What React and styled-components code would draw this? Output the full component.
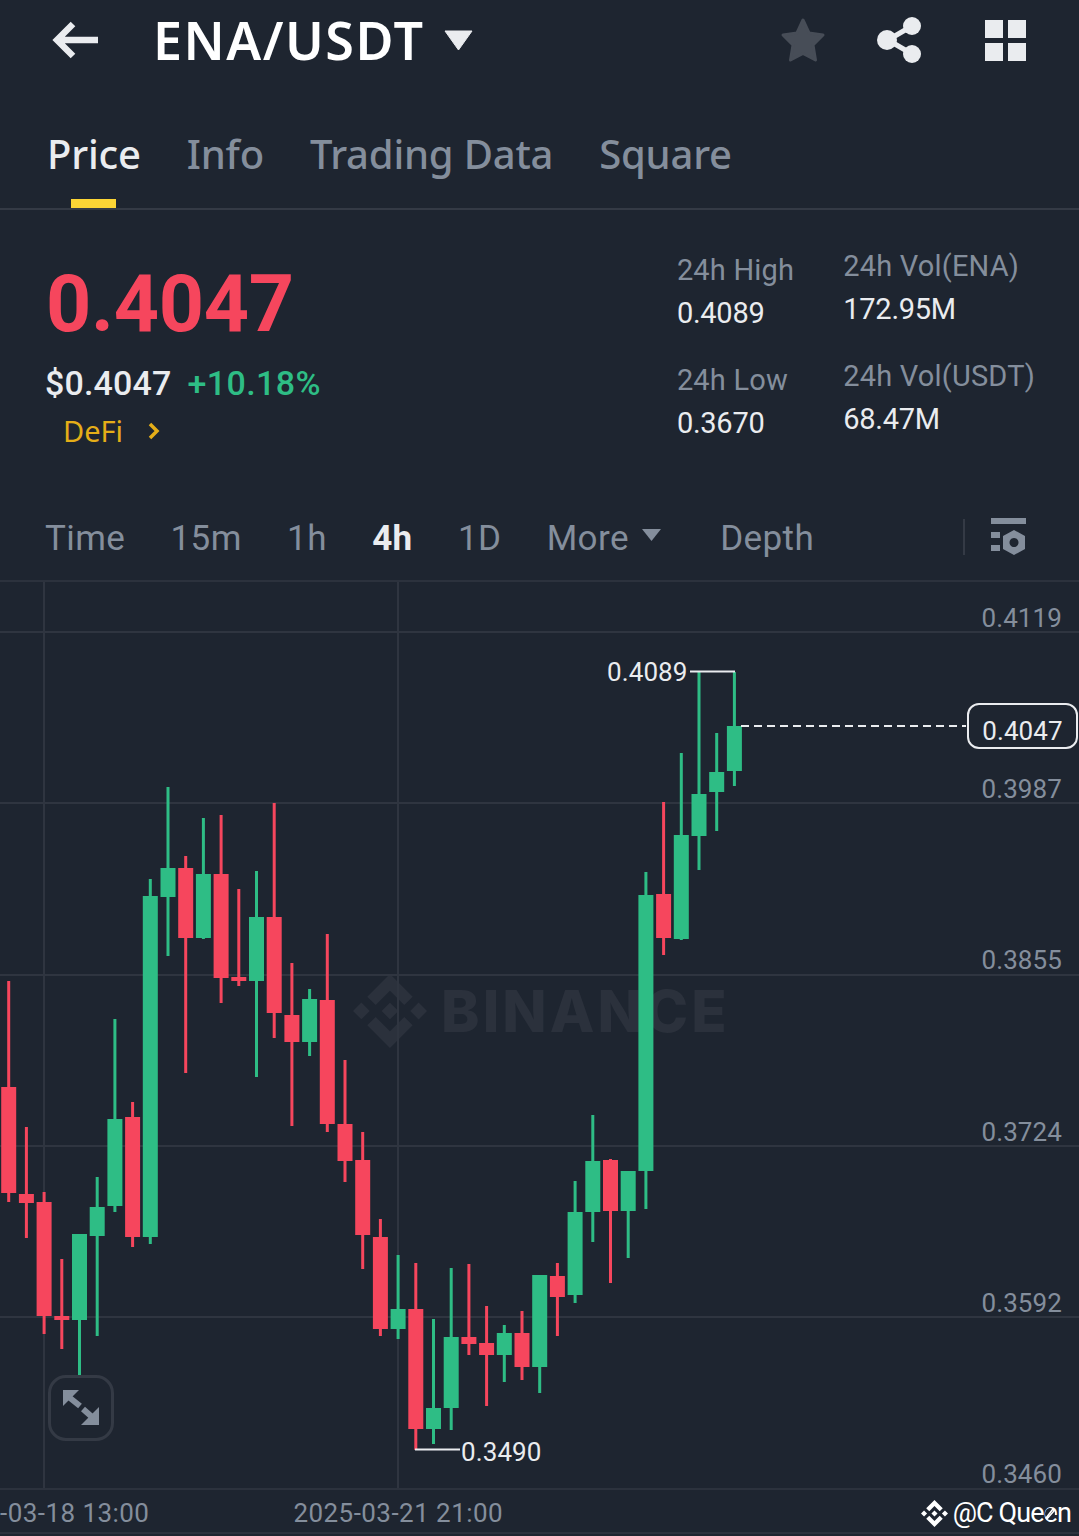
import React from 'react'
import styled, { createGlobalStyle } from 'styled-components'
import { SiBinance } from 'react-icons/si'

const UP = '#2ebd85'
const DOWN = '#f6465d'
const CHART_TOP = 582

// color, wick top, body top, body bottom, wick bottom (page y)
const candles = [
  ['d', 981, 1087, 1193, 1202], ['d', 1127, 1194, 1203, 1238], ['d', 1192, 1202, 1316, 1334],
  ['d', 1259, 1316, 1320, 1349], ['u', 1234, 1234, 1320, 1375], ['u', 1177, 1207, 1236, 1336],
  ['u', 1019, 1119, 1206, 1212], ['d', 1102, 1117, 1237, 1247], ['u', 879, 896, 1237, 1244],
  ['u', 787, 868, 897, 956], ['d', 856, 868, 938, 1073], ['u', 818, 874, 938, 939],
  ['d', 815, 874, 978, 1003], ['d', 889, 977, 981, 986], ['u', 871, 917, 981, 1077],
  ['d', 803, 917, 1013, 1038], ['d', 963, 1015, 1042, 1126], ['u', 989, 999, 1042, 1056],
  ['d', 934, 1000, 1124, 1132], ['d', 1060, 1124, 1161, 1182], ['d', 1132, 1160, 1235, 1269],
  ['d', 1219, 1237, 1329, 1336], ['u', 1255, 1309, 1329, 1339], ['d', 1263, 1309, 1429, 1450],
  ['u', 1319, 1408, 1429, 1444], ['u', 1268, 1337, 1408, 1430], ['d', 1264, 1337, 1344, 1355],
  ['d', 1306, 1343, 1355, 1406], ['u', 1325, 1333, 1355, 1382], ['d', 1311, 1333, 1367, 1380],
  ['u', 1275, 1275, 1367, 1393], ['d', 1263, 1276, 1297, 1336], ['u', 1181, 1212, 1295, 1303],
  ['u', 1115, 1161, 1212, 1242], ['d', 1159, 1160, 1211, 1283], ['u', 1171, 1171, 1211, 1258],
  ['u', 872, 895, 1171, 1209], ['d', 802, 894, 938, 955], ['u', 753, 835, 939, 940],
  ['u', 672, 794, 836, 870], ['u', 733, 772, 792, 831], ['u', 672, 726, 771, 786],
]

const GlobalStyle = createGlobalStyle`
  html, body { margin: 0; padding: 0; background: #1e2530; }
  * { box-sizing: border-box; }
`

const Page = styled.div`
  width: 1079px;
  height: 1536px;
  overflow: hidden;
  background: #1e2530;
  color: #eaecef;
  font-family: "Noto Sans", Roboto, sans-serif;
`

const Header = styled.div`
  height: 84px;
  display: flex;
  align-items: center;
  padding: 0 53px 4px 52px;
`

const Title = styled.div`
  margin-left: 55px;
  font-size: 52px;
  font-weight: 600;
  line-height: 60px;
  color: #fff;
  letter-spacing: 1.5px;
`

const TitleCaret = styled.svg`
  margin-left: 20px;
`

const HeaderIcons = styled.div`
  margin-left: auto;
  display: flex;
  align-items: center;
  gap: 51px;
`

const LastIcon = styled.svg`
  margin-left: 13px;
`

const Tabs = styled.div`
  height: 126px;
  display: flex;
  gap: 46px;
  padding: 45px 0 0 47px;
  border-bottom: 2px solid #343a45;
`

const Tab = styled.div`
  position: relative;
  height: 79px;
  font-size: 40px;
  line-height: 50px;
  font-weight: 500;
  letter-spacing: -0.2px;
  color: ${(p) => (p.$active ? '#eaecef' : '#848e9c')};

  &::after {
    content: '';
    display: ${(p) => (p.$active ? 'block' : 'none')};
    position: absolute;
    left: 24px;
    bottom: 0;
    width: 45px;
    height: 9px;
    background: #fcd535;
  }
`

const Stats = styled.div`
  height: 281px;
  display: flex;
  justify-content: space-between;
`

const PriceBlock = styled.div`
  padding: 49px 0 0 46px;
`

const LastPrice = styled.div`
  font-family: Roboto, sans-serif;
  font-size: 79px;
  line-height: 90px;
  font-weight: 700;
  letter-spacing: -0.3px;
  color: ${DOWN};
`

const SubRow = styled.div`
  margin: 14px 0 0 -1px;
  display: flex;
  gap: 16px;
  font-family: Roboto, sans-serif;
  font-size: 34px;
  line-height: 40px;
  font-weight: 500;
  letter-spacing: 0.15px;
`

const Change = styled.span`
  color: ${UP};
  letter-spacing: 0.4px;
`

const SectorLink = styled.div`
  margin: 10px 0 0 17px;
  display: flex;
  align-items: center;
  gap: 24px;
  font-size: 29px;
  line-height: 36px;
  color: #e5ae18;
`

const StatGrid = styled.div`
  display: flex;
  gap: 49px;
  padding-right: 44px;
`

const StatColumn = styled.div`
  display: flex;
  flex-direction: column;
  gap: 24px;
  padding-top: ${(p) => p.$top}px;
`

const StatLabel = styled.div`
  font-family: Roboto, sans-serif;
  font-size: 29px;
  line-height: 43px;
  color: #848e9c;
  letter-spacing: 0.2px;
`

const StatValue = styled.div`
  font-family: Roboto, sans-serif;
  font-size: 29px;
  line-height: 43px;
  color: #eaecef;
  letter-spacing: -0.25px;
`

const Intervals = styled.div`
  height: 91px;
  display: flex;
  align-items: center;
  gap: 45.3px;
  padding: 6px 52px 0 45px;
  border-bottom: 2px solid #2c323d;
  font-family: Roboto, sans-serif;
  font-size: 35px;
`

const Interval = styled.div`
  color: ${(p) => (p.$active ? '#eaecef' : '#848e9c')};
  font-weight: ${(p) => (p.$active ? 700 : 400)};
  letter-spacing: 0.4px;
  display: flex;
  align-items: center;
  gap: 12px;
  margin-right: ${(p) => p.$after || 0}px;
`

const MoreCaret = styled.svg`
  margin-bottom: 7px;
`

const IntervalTools = styled.div`
  margin-left: auto;
  margin-top: -4px;
  display: flex;
  align-items: center;
  gap: 25px;
`

const ToolDivider = styled.div`
  width: 2px;
  height: 36px;
  background: #343a45;
`

const Chart = styled.div`
  position: relative;
  height: 908px;
  border-bottom: 2px solid #2c323d;
`

const Watermark = styled.div`
  position: absolute;
  left: 353px;
  top: 391px;
  display: flex;
  align-items: center;
  gap: 14px;
  color: #2b313c;
  font-family: Inter, sans-serif;
  font-size: 58px;
  line-height: 76px;
  font-weight: 800;
  letter-spacing: 3.1px;
`

const Plot = styled.svg`
  position: absolute;
  left: 0;
  top: 0;
`

const PriceAxis = styled.div`
  position: absolute;
  top: 20px;
  right: 17px;
  height: 888px;
  display: flex;
  flex-direction: column;
  justify-content: space-between;
  align-items: flex-end;
`

const AxisLabel = styled.div`
  font-family: Roboto, sans-serif;
  font-size: 26px;
  line-height: 32px;
  letter-spacing: 0.1px;
  color: #848e9c;
`

const CurrentPrice = styled.div`
  position: absolute;
  left: 967px;
  top: 121px;
  width: 111px;
  height: 46px;
  display: flex;
  align-items: center;
  justify-content: center;
  padding-top: 9px;
  border: 2px solid #eaecef;
  border-radius: 12px;
  background: #1e2530;
  font-family: Roboto, sans-serif;
  font-size: 26px;
  letter-spacing: 0.1px;
`

const PeakLabel = styled.div`
  position: absolute;
  left: ${(p) => p.$x}px;
  top: ${(p) => p.$y}px;
  font-family: Roboto, sans-serif;
  font-size: 26px;
  line-height: 32px;
  letter-spacing: 0.1px;
  color: #eaecef;
`

const ExpandButton = styled.div`
  position: absolute;
  left: 48px;
  top: 793px;
  width: 66px;
  height: 66px;
  display: flex;
  align-items: center;
  justify-content: center;
  border: 3px solid #343a45;
  border-radius: 18px;
  background: #1e2530;
`

const TimeAxis = styled.div`
  position: relative;
  height: 44px;
  display: flex;
  align-items: center;
  gap: 144px;
  border-bottom: 2px solid #2c323d;
  padding: 4px 8px 0 0;
  font-family: Roboto, sans-serif;
  font-size: 26px;
  letter-spacing: 0.45px;
  color: #848e9c;
`

const Author = styled.div`
  position: relative;
  margin-left: auto;
  display: flex;
  align-items: center;
  gap: 5px;
  color: #fff;
  font-family: Roboto, sans-serif;
  font-size: 27px;
  letter-spacing: -0.9px;
`

const EditMark = styled.svg`
  position: absolute;
  right: 15px;
  top: 8px;
`

const BackArrow = () => (
  <svg width="46" height="38" viewBox="0 0 46 38">
    <path d="M21 3 L5 19 L21 35 M6 19 H46" fill="none" stroke="#eaecef" strokeWidth="6.5" />
  </svg>
)

const StarIcon = () => (
  <svg width="46" height="46" viewBox="0 0 46 46">
    <path
      d="M23 3 L29 16 L43 18 L33 28 L35.5 43 L23 36.5 L10.5 43 L13 28 L3 18 L17 16 Z"
      fill="#474d57"
      stroke="#474d57"
      strokeWidth="3"
      strokeLinejoin="round"
    />
  </svg>
)

const ShareIcon = () => (
  <svg width="44" height="46" viewBox="0 0 44 46">
    <path d="M11 23 L35 9 M11 23 L35 37" stroke="#eaecef" strokeWidth="5" />
    <circle cx="10" cy="23" r="10" fill="#eaecef" />
    <circle cx="35" cy="9" r="9" fill="#eaecef" />
    <circle cx="35" cy="37" r="9" fill="#eaecef" />
  </svg>
)

const GridIcon = () => (
  <LastIcon width="41" height="41" viewBox="0 0 41 41">
    <path d="M0 0 H18 V18 H0 Z M23 0 H41 V18 H23 Z M0 23 H18 V41 H0 Z M23 23 H41 V41 H23 Z" fill="#eaecef" />
  </LastIcon>
)

const SettingsIcon = () => (
  <svg width="37" height="38" viewBox="0 0 37 38">
    <path d="M1 0 H36 V6 H1 Z M1 14 H10 V20 H1 Z M1 27 H10 V33 H1 Z" fill="#848e9c" />
    <path
      fillRule="evenodd"
      d="M24 12 L35 18 V31 L24 37 L13 31 V18 Z M24 20 a4.5 4.5 0 1 0 0.01 0 Z"
      fill="#848e9c"
    />
  </svg>
)

const ExpandIcon = () => (
  <svg width="42" height="42" viewBox="0 0 42 42">
    <path d="M3 3 H19 L3 19 Z M39 38 H21 L39 20 Z" fill="#848e9c" />
    <path d="M10 11 L20 19 M32 30 L23 22" stroke="#848e9c" strokeWidth="6" />
  </svg>
)

const App = () => {
  let tabs = ['Price', 'Info', 'Trading Data', 'Square']
  let gridLines = [632, 803, 975, 1146, 1317]
  let axis = ['0.4119', '0.3987', '0.3855', '0.3724', '0.3592', '0.3460']

  return (
    <Page>
      <GlobalStyle />
      <Header>
        <BackArrow />
        <Title>ENA/USDT</Title>
        <TitleCaret width="29" height="21" viewBox="0 0 29 21">
          <path d="M1 1 H28 L14.5 20 Z" fill="#eaecef" stroke="#eaecef" strokeWidth="1" strokeLinejoin="round" />
        </TitleCaret>
        <HeaderIcons>
          <StarIcon />
          <ShareIcon />
          <GridIcon />
        </HeaderIcons>
      </Header>

      <Tabs>
        {tabs.map((tab, i) => (
          <Tab key={tab} $active={i === 0}>{tab}</Tab>
        ))}
      </Tabs>

      <Stats>
        <PriceBlock>
          <LastPrice>0.4047</LastPrice>
          <SubRow>
            <span>$0.4047</span>
            <Change>+10.18%</Change>
          </SubRow>
          <SectorLink>
            DeFi
            <svg width="14" height="18" viewBox="0 0 14 18">
              <path d="M3 2 L10 9 L3 16" fill="none" stroke="#e5ae18" strokeWidth="3.5" />
            </svg>
          </SectorLink>
        </PriceBlock>
        <StatGrid>
          <StatColumn $top={39}>
            <div>
              <StatLabel>24h High</StatLabel>
              <StatValue>0.4089</StatValue>
            </div>
            <div>
              <StatLabel>24h Low</StatLabel>
              <StatValue>0.3670</StatValue>
            </div>
          </StatColumn>
          <StatColumn $top={35}>
            <div>
              <StatLabel>24h Vol(ENA)</StatLabel>
              <StatValue>172.95M</StatValue>
            </div>
            <div>
              <StatLabel>24h Vol(USDT)</StatLabel>
              <StatValue>68.47M</StatValue>
            </div>
          </StatColumn>
        </StatGrid>
      </Stats>

      <Intervals>
        <Interval>Time</Interval>
        <Interval>15m</Interval>
        <Interval>1h</Interval>
        <Interval $active>4h</Interval>
        <Interval>1D</Interval>
        <Interval $after={13}>
          More
          <MoreCaret width="21" height="14" viewBox="0 0 21 14">
            <path d="M1 1 H20 L10.5 13 Z" fill="#848e9c" />
          </MoreCaret>
        </Interval>
        <Interval>Depth</Interval>
        <IntervalTools>
          <ToolDivider />
          <SettingsIcon />
        </IntervalTools>
      </Intervals>

      <Chart>
        <Watermark>
          <SiBinance size={74} />
          BINANCE
        </Watermark>
        <Plot width="1079" height="906" viewBox={`0 ${CHART_TOP} 1079 906`}>
          {gridLines.map((y) => (
            <rect key={y} x="0" y={y - 1} width="1079" height="2" fill="#2f3540" />
          ))}
          <rect x="43" y={CHART_TOP} width="2" height="906" fill="#2f3540" />
          <rect x="397" y={CHART_TOP} width="2" height="906" fill="#2f3540" />
          {candles.map((c, i) => {
            let x = 8.7 + i * 17.7
            let color = c[0] === 'u' ? UP : DOWN
            return (
              <g key={i} fill={color}>
                <rect x={x - 1.5} y={c[1]} width="3" height={c[4] - c[1]} />
                <rect x={x - 7.5} y={c[2]} width="15" height={c[3] - c[2]} />
              </g>
            )
          })}
          <path d="M690 671.5 H735 M415 1449.5 H460" stroke="#eaecef" strokeWidth="2" fill="none" />
          <path d="M741 726 H966" stroke="#eaecef" strokeWidth="2" strokeDasharray="8 5" fill="none" />
        </Plot>
        <PriceAxis>
          {axis.map((label) => (
            <AxisLabel key={label}>{label}</AxisLabel>
          ))}
        </PriceAxis>
        <CurrentPrice>0.4047</CurrentPrice>
        <PeakLabel $x={607} $y={74}>0.4089</PeakLabel>
        <PeakLabel $x={461} $y={854}>0.3490</PeakLabel>
        <ExpandButton>
          <ExpandIcon />
        </ExpandButton>
      </Chart>

      <TimeAxis>
        <span>-03-18 13:00</span>
        <span>2025-03-21 21:00</span>
        <Author>
          <SiBinance size={27} />
          @C Queen
          <EditMark width="12" height="16" viewBox="0 0 12 16">
            <ellipse cx="6" cy="9" rx="5" ry="6" fill="#1e2530" />
            <path d="M2 13 L9 4 L10 6 L3 14 Z" fill="none" stroke="#fff" strokeWidth="1.5" />
          </EditMark>
        </Author>
      </TimeAxis>
    </Page>
  )
}

export default App
